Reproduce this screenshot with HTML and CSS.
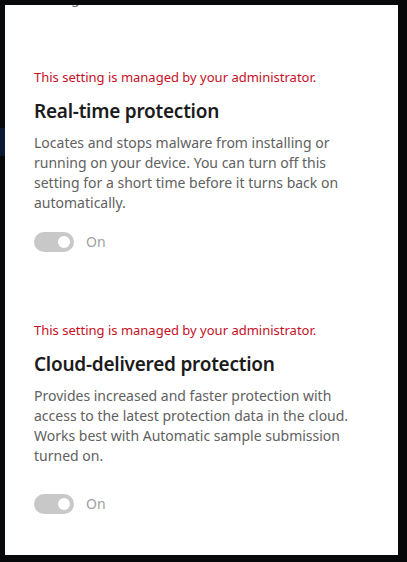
FILE: index.html
```html
<!DOCTYPE html>
<html>
<head>
<meta charset="utf-8">
<link rel="stylesheet" href="styles.css">
</head>
<body>
<div class="edge-mark"></div>
<div class="panel">
  <p class="cut-line">settings for Microsoft Defender Antivirus.</p>

  <section class="setting first">
    <p class="managed">This setting is managed by your administrator.</p>
    <h2 class="title">Real-time protection</h2>
    <p class="desc">Locates and stops malware from installing or running on your device. You can turn off this setting for a short time before it turns back on automatically.</p>
    <div class="toggle-row">
      <span class="toggle"><span class="knob"></span></span>
      <span class="state">On</span>
    </div>
  </section>

  <section class="setting second">
    <p class="managed">This setting is managed by your administrator.</p>
    <h2 class="title">Cloud-delivered protection</h2>
    <p class="desc">Provides increased and faster protection with access to the latest protection data in the cloud. Works best with Automatic sample submission turned on.</p>
    <div class="toggle-row">
      <span class="toggle"><span class="knob"></span></span>
      <span class="state">On</span>
    </div>
  </section>
</div>
</body>
</html>
```

FILE: styles.css
```css
html, body {
  margin: 0;
  padding: 0;
  background: #07080a;
}
body {
  width: 407px;
  height: 562px;
  overflow: hidden;
  position: relative;
  font-family: "Segoe UI", "Noto Sans", "Open Sans", sans-serif;
}
.edge-mark {
  position: absolute;
  left: 0;
  top: 128px;
  width: 5px;
  height: 28px;
  background: #0a1a33;
}
.panel {
  position: relative;
  margin: 5px 0 0 5px;
  width: 393px;
  height: 550px;
  background: #ffffff;
  overflow: hidden;
  padding-left: 29px;
  box-sizing: border-box;
}
.cut-line {
  margin: -17px 0 0 0;
  font-size: 14px;
  line-height: 20px;
  color: #666666;
  white-space: nowrap;
}
.managed {
  margin: 0;
  font-size: 13px;
  line-height: 18px;
  color: #c50f1f;
  white-space: nowrap;
}
.first .managed { margin-top: 60px; }
.second .managed { margin-top: 69px; }
.title {
  margin: 11px 0 0 0;
  font-size: 19px;
  line-height: 28px;
  font-weight: 600;
  letter-spacing: -0.25px;
  color: #1b1b1b;
}
.desc {
  margin: 8px 0 0 0;
  width: 322px;
  font-size: 14px;
  line-height: 20px;
  color: #616161;
}
.toggle-row {
  display: flex;
  align-items: center;
  gap: 12px;
  height: 20px;
}
.first .toggle-row { margin-top: 19px; }
.second .toggle-row { margin-top: 28px; }
.toggle {
  width: 40px;
  height: 20px;
  border-radius: 10px;
  background: #c8c8c8;
  display: flex;
  align-items: center;
  justify-content: flex-end;
  padding-right: 4px;
  box-sizing: border-box;
}
.knob {
  width: 12px;
  height: 12px;
  border-radius: 50%;
  background: #ffffff;
}
.state {
  font-size: 14px;
  color: #a0a0a0;
  line-height: 20px;
}
```
